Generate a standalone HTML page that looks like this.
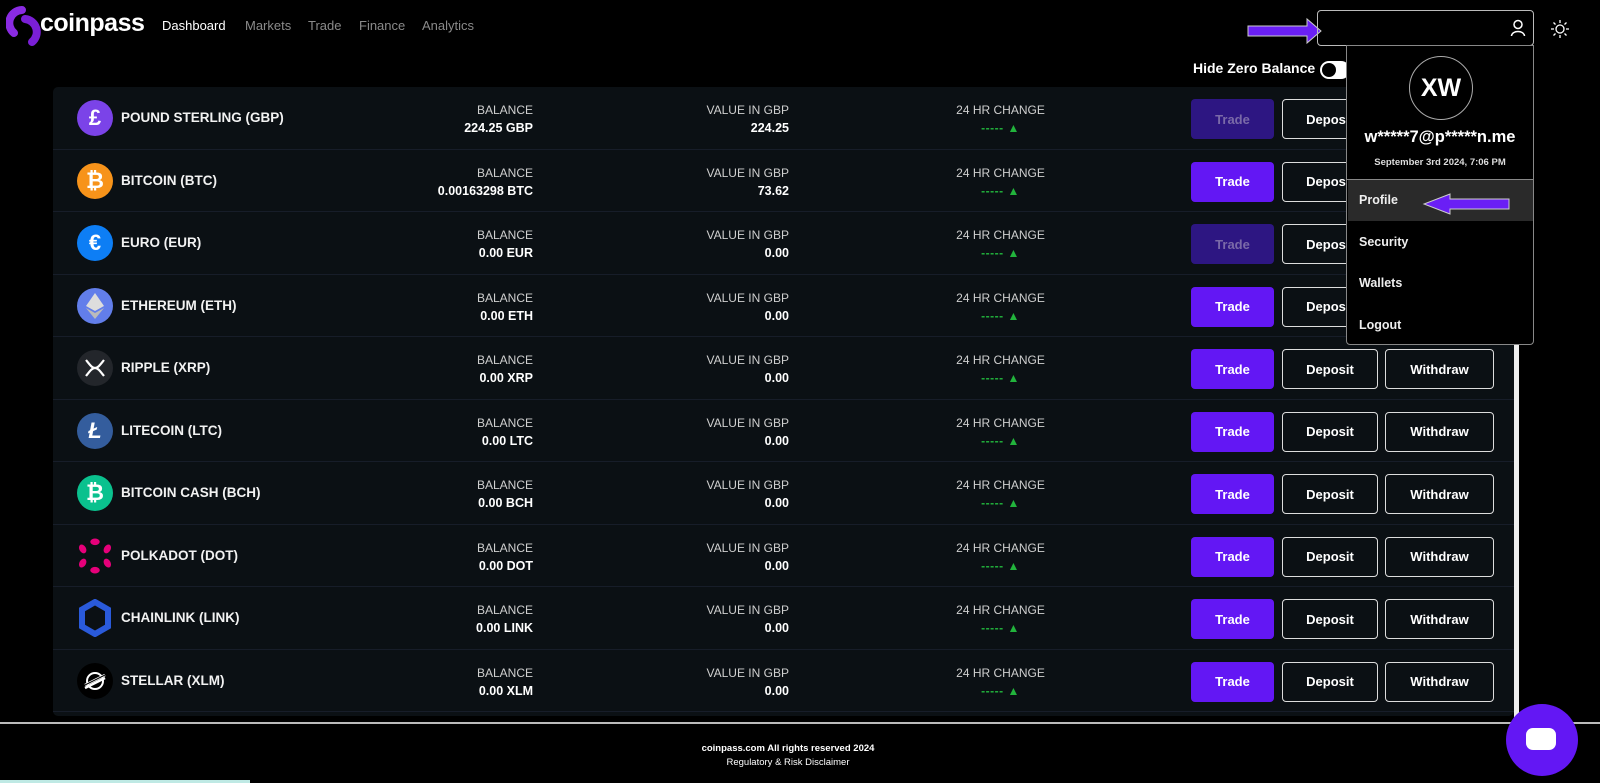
<!DOCTYPE html>
<html><head><meta charset="utf-8"><style>
*{box-sizing:border-box;margin:0;padding:0}
body{width:1600px;height:783px;background:#000;font-family:"Liberation Sans",sans-serif;color:#fff;position:relative;overflow:hidden}
.nav{position:absolute;top:18px;font-size:13px;color:#8a8a8a}
.panel{position:absolute;left:53px;top:87px;width:1461px;height:629px;background:#0b1014;border-radius:5px}
.row{position:absolute;left:0;width:1461px;height:62.5px;border-bottom:1px solid #171d29}
.ic{position:absolute;left:24px;top:13px;width:36px;height:36px;border-radius:50%;display:flex;align-items:center;justify-content:center;font-weight:bold;font-size:22px;color:#fff}
.nm{position:absolute;left:68px;top:23px;font-size:13.5px;font-weight:bold;color:#f2f2f2}
.col{position:absolute;top:14px;font-size:12px;text-align:right;color:#cfcfcf;line-height:18px}
.col b{color:#fff;display:block;font-size:12.5px}
.chg{position:absolute;left:880px;width:135px;top:14px;text-align:center;font-size:12px;color:#cfcfcf;line-height:18px}
.chg span{color:#22b43c;font-size:12px;font-weight:bold;letter-spacing:0.5px}
.btn{position:absolute;top:12px;height:40px;border-radius:4px;display:flex;align-items:center;justify-content:center;font-size:13px;font-weight:bold}
.tr{left:1138px;width:83px;background:#6317f4;color:#fff}
.tr.dis{background:#2d1682;color:#7a6aa8}
.dp{left:1229px;width:96px;border:1.5px solid #ddd}
.wd{left:1332px;width:109px;border:1.5px solid #ddd}
.menu{position:absolute;left:1346px;top:45px;width:188px;height:300px;background:#000;border:1px solid #888;border-radius:0 0 4px 4px}
.mi{position:absolute;left:12px;font-size:12.5px;font-weight:bold;color:#eee}
</style></head><body>
<svg style="position:absolute;left:6px;top:6px" width="36" height="40" viewBox="0 0 36 40"><path d="M16 4 A13 13 0 0 0 8 27" stroke="#8a2be2" stroke-width="8" fill="none" stroke-linecap="round"/><path d="M19 13 A13 13 0 0 1 26 36" stroke="#7a1fd6" stroke-width="8" fill="none" stroke-linecap="round"/></svg>
<div style="position:absolute;left:40px;top:9px;font-size:25px;font-weight:bold;letter-spacing:-0.5px">coinpass</div>
<div class="nav" style="left:162px;color:#fff">Dashboard</div>
<div class="nav" style="left:245px">Markets</div>
<div class="nav" style="left:308px">Trade</div>
<div class="nav" style="left:359px">Finance</div>
<div class="nav" style="left:422px">Analytics</div>
<svg style="position:absolute;left:1245px;top:17px" width="80" height="28"><path d="M3 9 H62 V2 L76 14 L62 26 V19 H3 Z" fill="#6a1ff5" stroke="#ccc" stroke-width="1"/></svg>
<div style="position:absolute;left:1317px;top:10px;width:217px;height:36px;border:1px solid #bbb;border-radius:4px"></div>
<svg style="position:absolute;left:1510px;top:19px" width="16" height="18"><circle cx="8" cy="5.5" r="4" stroke="#fff" stroke-width="1.5" fill="none"/><path d="M1.5 17 C2 11 14 11 14.5 17" stroke="#fff" stroke-width="1.5" fill="none"/></svg>
<svg style="position:absolute;left:1550px;top:19px" width="20" height="20"><circle cx="10" cy="10" r="4" stroke="#fff" stroke-width="1.3" fill="none"/><g stroke="#fff" stroke-width="1.3"><path d="M10 1v3M10 16v3M1 10h3M16 10h3M3.5 3.5l2 2M14.5 14.5l2 2M3.5 16.5l2-2M14.5 5.5l2-2"/></g></svg>
<div style="position:absolute;left:1193px;top:60px;font-size:14px;font-weight:bold">Hide Zero Balance</div>
<div style="position:absolute;left:1320px;top:61px;width:30px;height:18px;border-radius:9px;background:#fff"></div>
<div style="position:absolute;left:1322px;top:63px;width:14px;height:14px;border-radius:50%;background:#000"></div>

<div class="panel">
<div class="row" style="top:0"><div class="ic" style="background:#7b43e8">£</div><div class="nm">POUND STERLING (GBP)</div><div class="col" style="right:981px">BALANCE<b>224.25 GBP</b></div><div class="col" style="right:725px">VALUE IN GBP<b>224.25</b></div><div class="chg">24 HR CHANGE<br><span>----- ▲</span></div><div class="btn tr dis">Trade</div><div class="btn dp">Deposit</div><div class="btn wd">Withdraw</div></div>
<div class="row" style="top:62.5px"><div class="ic" style="background:#f7931a">₿</div><div class="nm">BITCOIN (BTC)</div><div class="col" style="right:981px">BALANCE<b>0.00163298 BTC</b></div><div class="col" style="right:725px">VALUE IN GBP<b>73.62</b></div><div class="chg">24 HR CHANGE<br><span>----- ▲</span></div><div class="btn tr">Trade</div><div class="btn dp">Deposit</div><div class="btn wd">Withdraw</div></div>
<div class="row" style="top:125px"><div class="ic" style="background:#0d7ef5">€</div><div class="nm">EURO (EUR)</div><div class="col" style="right:981px">BALANCE<b>0.00 EUR</b></div><div class="col" style="right:725px">VALUE IN GBP<b>0.00</b></div><div class="chg">24 HR CHANGE<br><span>----- ▲</span></div><div class="btn tr dis">Trade</div><div class="btn dp">Deposit</div><div class="btn wd">Withdraw</div></div>
<div class="row" style="top:187.5px"><div class="ic" style="background:#627eea"><svg width="18" height="26" viewBox="0 0 18 26"><path d="M9 0 L18 13 L9 18 L0 13Z" fill="#ddd"/><path d="M9 20 L18 15 L9 26 L0 15Z" fill="#bbb"/></svg></div><div class="nm">ETHEREUM (ETH)</div><div class="col" style="right:981px">BALANCE<b>0.00 ETH</b></div><div class="col" style="right:725px">VALUE IN GBP<b>0.00</b></div><div class="chg">24 HR CHANGE<br><span>----- ▲</span></div><div class="btn tr">Trade</div><div class="btn dp">Deposit</div><div class="btn wd">Withdraw</div></div>
<div class="row" style="top:250px"><div class="ic" style="background:#23262b"><svg width="22" height="22" viewBox="0 0 22 22"><path d="M2 3 C6 8 8 11 11 11 C14 11 16 8 20 3 M2 19 C6 14 8 11 11 11 C14 11 16 14 20 19" stroke="#fff" stroke-width="2.2" fill="none"/></svg></div><div class="nm">RIPPLE (XRP)</div><div class="col" style="right:981px">BALANCE<b>0.00 XRP</b></div><div class="col" style="right:725px">VALUE IN GBP<b>0.00</b></div><div class="chg">24 HR CHANGE<br><span>----- ▲</span></div><div class="btn tr">Trade</div><div class="btn dp">Deposit</div><div class="btn wd">Withdraw</div></div>
<div class="row" style="top:312.5px"><div class="ic" style="background:#345d9d;font-style:italic">Ł</div><div class="nm">LITECOIN (LTC)</div><div class="col" style="right:981px">BALANCE<b>0.00 LTC</b></div><div class="col" style="right:725px">VALUE IN GBP<b>0.00</b></div><div class="chg">24 HR CHANGE<br><span>----- ▲</span></div><div class="btn tr">Trade</div><div class="btn dp">Deposit</div><div class="btn wd">Withdraw</div></div>
<div class="row" style="top:375px"><div class="ic" style="background:#0ac18e">₿</div><div class="nm">BITCOIN CASH (BCH)</div><div class="col" style="right:981px">BALANCE<b>0.00 BCH</b></div><div class="col" style="right:725px">VALUE IN GBP<b>0.00</b></div><div class="chg">24 HR CHANGE<br><span>----- ▲</span></div><div class="btn tr">Trade</div><div class="btn dp">Deposit</div><div class="btn wd">Withdraw</div></div>
<div class="row" style="top:437.5px"><div class="ic"><svg width="38" height="38" viewBox="0 0 38 38"><g fill="#e6007a"><ellipse cx="19" cy="4" rx="5" ry="3.5"/><ellipse cx="19" cy="34" rx="5" ry="3.5"/><ellipse cx="6" cy="11.5" rx="5" ry="3.5" transform="rotate(60 6 11.5)"/><ellipse cx="32" cy="11.5" rx="5" ry="3.5" transform="rotate(-60 32 11.5)"/><ellipse cx="6" cy="26.5" rx="5" ry="3.5" transform="rotate(-60 6 26.5)"/><ellipse cx="32" cy="26.5" rx="5" ry="3.5" transform="rotate(60 32 26.5)"/></g></svg></div><div class="nm">POLKADOT (DOT)</div><div class="col" style="right:981px">BALANCE<b>0.00 DOT</b></div><div class="col" style="right:725px">VALUE IN GBP<b>0.00</b></div><div class="chg">24 HR CHANGE<br><span>----- ▲</span></div><div class="btn tr">Trade</div><div class="btn dp">Deposit</div><div class="btn wd">Withdraw</div></div>
<div class="row" style="top:500px"><div class="ic"><svg width="34" height="38" viewBox="0 0 34 38"><path d="M17 3 L30 10.5 V27.5 L17 35 L4 27.5 V10.5Z" stroke="#2a5ada" stroke-width="6" fill="none"/></svg></div><div class="nm">CHAINLINK (LINK)</div><div class="col" style="right:981px">BALANCE<b>0.00 LINK</b></div><div class="col" style="right:725px">VALUE IN GBP<b>0.00</b></div><div class="chg">24 HR CHANGE<br><span>----- ▲</span></div><div class="btn tr">Trade</div><div class="btn dp">Deposit</div><div class="btn wd">Withdraw</div></div>
<div class="row" style="top:562.5px"><div class="ic" style="background:#000"><svg width="24" height="22"><circle cx="12" cy="11" r="8" stroke="#fff" stroke-width="2" fill="none"/><path d="M2 15 L22 5 M2 18 L22 8" stroke="#fff" stroke-width="2.5"/><path d="M2 15 L22 5" stroke="#000" stroke-width="1"/></svg></div><div class="nm">STELLAR (XLM)</div><div class="col" style="right:981px">BALANCE<b>0.00 XLM</b></div><div class="col" style="right:725px">VALUE IN GBP<b>0.00</b></div><div class="chg">24 HR CHANGE<br><span>----- ▲</span></div><div class="btn tr">Trade</div><div class="btn dp">Deposit</div><div class="btn wd">Withdraw</div></div>
</div>
<div style="position:absolute;left:1514px;top:87px;width:5px;height:636px;background:#eee"></div>

<div class="menu">
<div style="position:absolute;left:62px;top:10px;width:64px;height:64px;border:1.5px solid #aaa;border-radius:50%;display:flex;align-items:center;justify-content:center;font-size:25px;font-weight:bold">XW</div>
<div style="position:absolute;left:0;width:186px;top:82px;text-align:center;font-size:16.5px;font-weight:bold">w*****7@p*****n.me</div>
<div style="position:absolute;left:0;width:186px;top:111px;text-align:center;font-size:9.5px;font-weight:bold;color:#ddd">September 3rd 2024, 7:06 PM</div>
<div style="position:absolute;left:0;top:133px;width:186px;height:1px;background:#888"></div>
<div style="position:absolute;left:1px;top:134px;width:185px;height:41px;background:#2a2a2a"></div>
<div class="mi" style="top:147px">Profile</div>
<div class="mi" style="top:189px">Security</div>
<div class="mi" style="top:230px">Wallets</div>
<div class="mi" style="top:272px">Logout</div>
<svg style="position:absolute;left:75px;top:147px" width="90" height="22"><path d="M87 6 H28 V1 L2 11 L28 21 V16 H87Z" fill="#6a1ff5" stroke="#ccc" stroke-width="1"/></svg>
</div>

<div style="position:absolute;left:0;top:722px;width:1600px;height:2px;background:#bbb"></div>
<div style="position:absolute;left:688px;width:200px;top:742px;text-align:center;font-size:9.5px;font-weight:bold;line-height:14px">coinpass.com All rights reserved 2024<br><span style="font-weight:normal">Regulatory &amp; Risk Disclaimer</span></div>
<div style="position:absolute;left:1506px;top:704px;width:72px;height:72px;border-radius:50%;background:#6317f4"></div>
<div style="position:absolute;left:1526px;top:728px;width:30px;height:22px;border-radius:7px;background:#fff"></div>
<div style="position:absolute;left:0;top:780px;width:250px;height:3px;background:#bfe9e4"></div>
</body></html>
